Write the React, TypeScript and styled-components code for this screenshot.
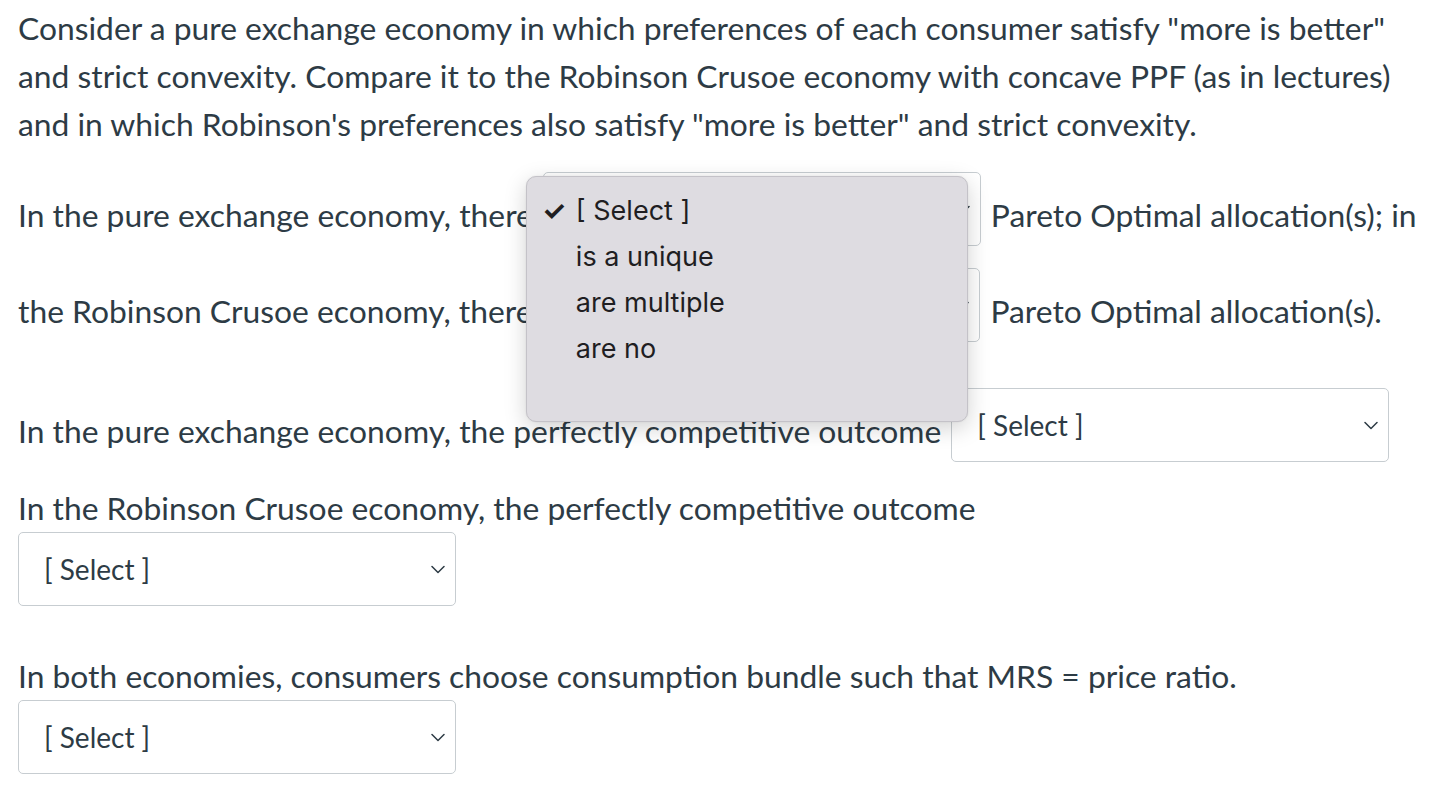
import React, { FC } from 'react';
import styled, { createGlobalStyle } from 'styled-components';

const GlobalStyle = createGlobalStyle`
  html, body {
    margin: 0;
    padding: 0;
    background: #ffffff;
  }
  body {
    font-family: Lato, "Open Sans", "Liberation Sans", sans-serif;
    color: #2d3b45;
  }
`;

const Page = styled.div`
  padding: 4px 18px 0 18px;
  font-size: 31.8px;
  line-height: 48px;
  color: #2d3b45;
`;

const Paragraph = styled.p<{ $gap?: number }>`
  margin: 0 0 ${p => p.$gap ?? 0}px 0;
  white-space: nowrap;
`;

const Row = styled.div<{ $gap?: number }>`
  display: flex;
  align-items: center;
  gap: 10px;
  margin-bottom: ${p => p.$gap ?? 0}px;
  white-space: nowrap;
`;

const Words = styled.span`
  padding-top: 12px;
`;

const SelectWrap = styled.div<{ $gap?: number }>`
  position: relative;
  flex: none;
  margin-bottom: ${p => p.$gap ?? 0}px;
  width: 438px;
`;

const SelectBox = styled.div`
  box-sizing: border-box;
  width: 438px;
  height: 74px;
  border: 1px solid #c7cdd1;
  border-radius: 5px;
  background: #ffffff;
  display: flex;
  align-items: center;
  justify-content: space-between;
  padding: 0 10px 0 25px;
  font-size: 28px;
  line-height: 1;
  color: #2d3b45;
`;

const Chevron = styled.svg`
  width: 14px;
  height: 9px;
  flex: none;
`;

const Popup = styled.div`
  position: absolute;
  left: -17px;
  top: 4px;
  width: 442px;
  height: 246px;
  box-sizing: border-box;
  z-index: 10;
  background: #dedce1;
  border: 1px solid #c4c2c8;
  border-radius: 10px;
  box-shadow: 0 6px 22px rgba(0, 0, 0, 0.18), 0 0 2px rgba(0, 0, 0, 0.08);
  padding-top: 11px;
  font-family: Inter, "Noto Sans", "Liberation Sans", sans-serif;
  font-size: 27px;
  color: #1f1e22;
`;

const Option = styled.div`
  display: flex;
  align-items: center;
  height: 46px;
  line-height: 46px;
`;

const Check = styled.span`
  width: 49px;
  text-align: right;
  padding-right: 10px;
  box-sizing: border-box;
  font-size: 27px;
  font-weight: 700;
`;

const Select: FC<{ gap?: number; open?: boolean }> = ({ gap, open }) => (
  <SelectWrap $gap={gap}>
    <SelectBox>
      <span>[ Select ]</span>
      <Chevron viewBox="0 0 14 9">
        <path d="M1 1.5 L7 7.5 L13 1.5" fill="none" stroke="#2d3b45" strokeWidth="1.5" strokeLinecap="round" strokeLinejoin="round" />
      </Chevron>
    </SelectBox>
    {open && (
      <Popup>
        <Option><Check>✓</Check>[ Select ]</Option>
        <Option><Check />is a unique</Option>
        <Option><Check />are multiple</Option>
        <Option><Check />are no</Option>
      </Popup>
    )}
  </SelectWrap>
);

const App: FC = () => (
  <Page>
    <GlobalStyle />
    <Paragraph $gap={24}>
      Consider a pure exchange economy in which preferences of each consumer satisfy "more is better"
      <br />
      and strict convexity. Compare it to the Robinson Crusoe economy with concave PPF (as in lectures)
      <br />
      and in which Robinson's preferences also satisfy "more is better" and strict convexity.
    </Paragraph>
    <Row $gap={22}>
      <Words>In the pure exchange economy, there</Words>
      <Select open />
      <Words>Pareto Optimal allocation(s); in</Words>
    </Row>
    <Row $gap={46}>
      <Words>the Robinson Crusoe economy, there</Words>
      <Select />
      <Words>Pareto Optimal allocation(s).</Words>
    </Row>
    <Row $gap={22}>
      <Words>In the pure exchange economy, the perfectly competitive outcome</Words>
      <Select />
    </Row>
    <Paragraph>In the Robinson Crusoe economy, the perfectly competitive outcome</Paragraph>
    <Select gap={46} />
    <Paragraph>In both economies, consumers choose consumption bundle such that MRS = price ratio.</Paragraph>
    <Select />
  </Page>
);

export default App;
